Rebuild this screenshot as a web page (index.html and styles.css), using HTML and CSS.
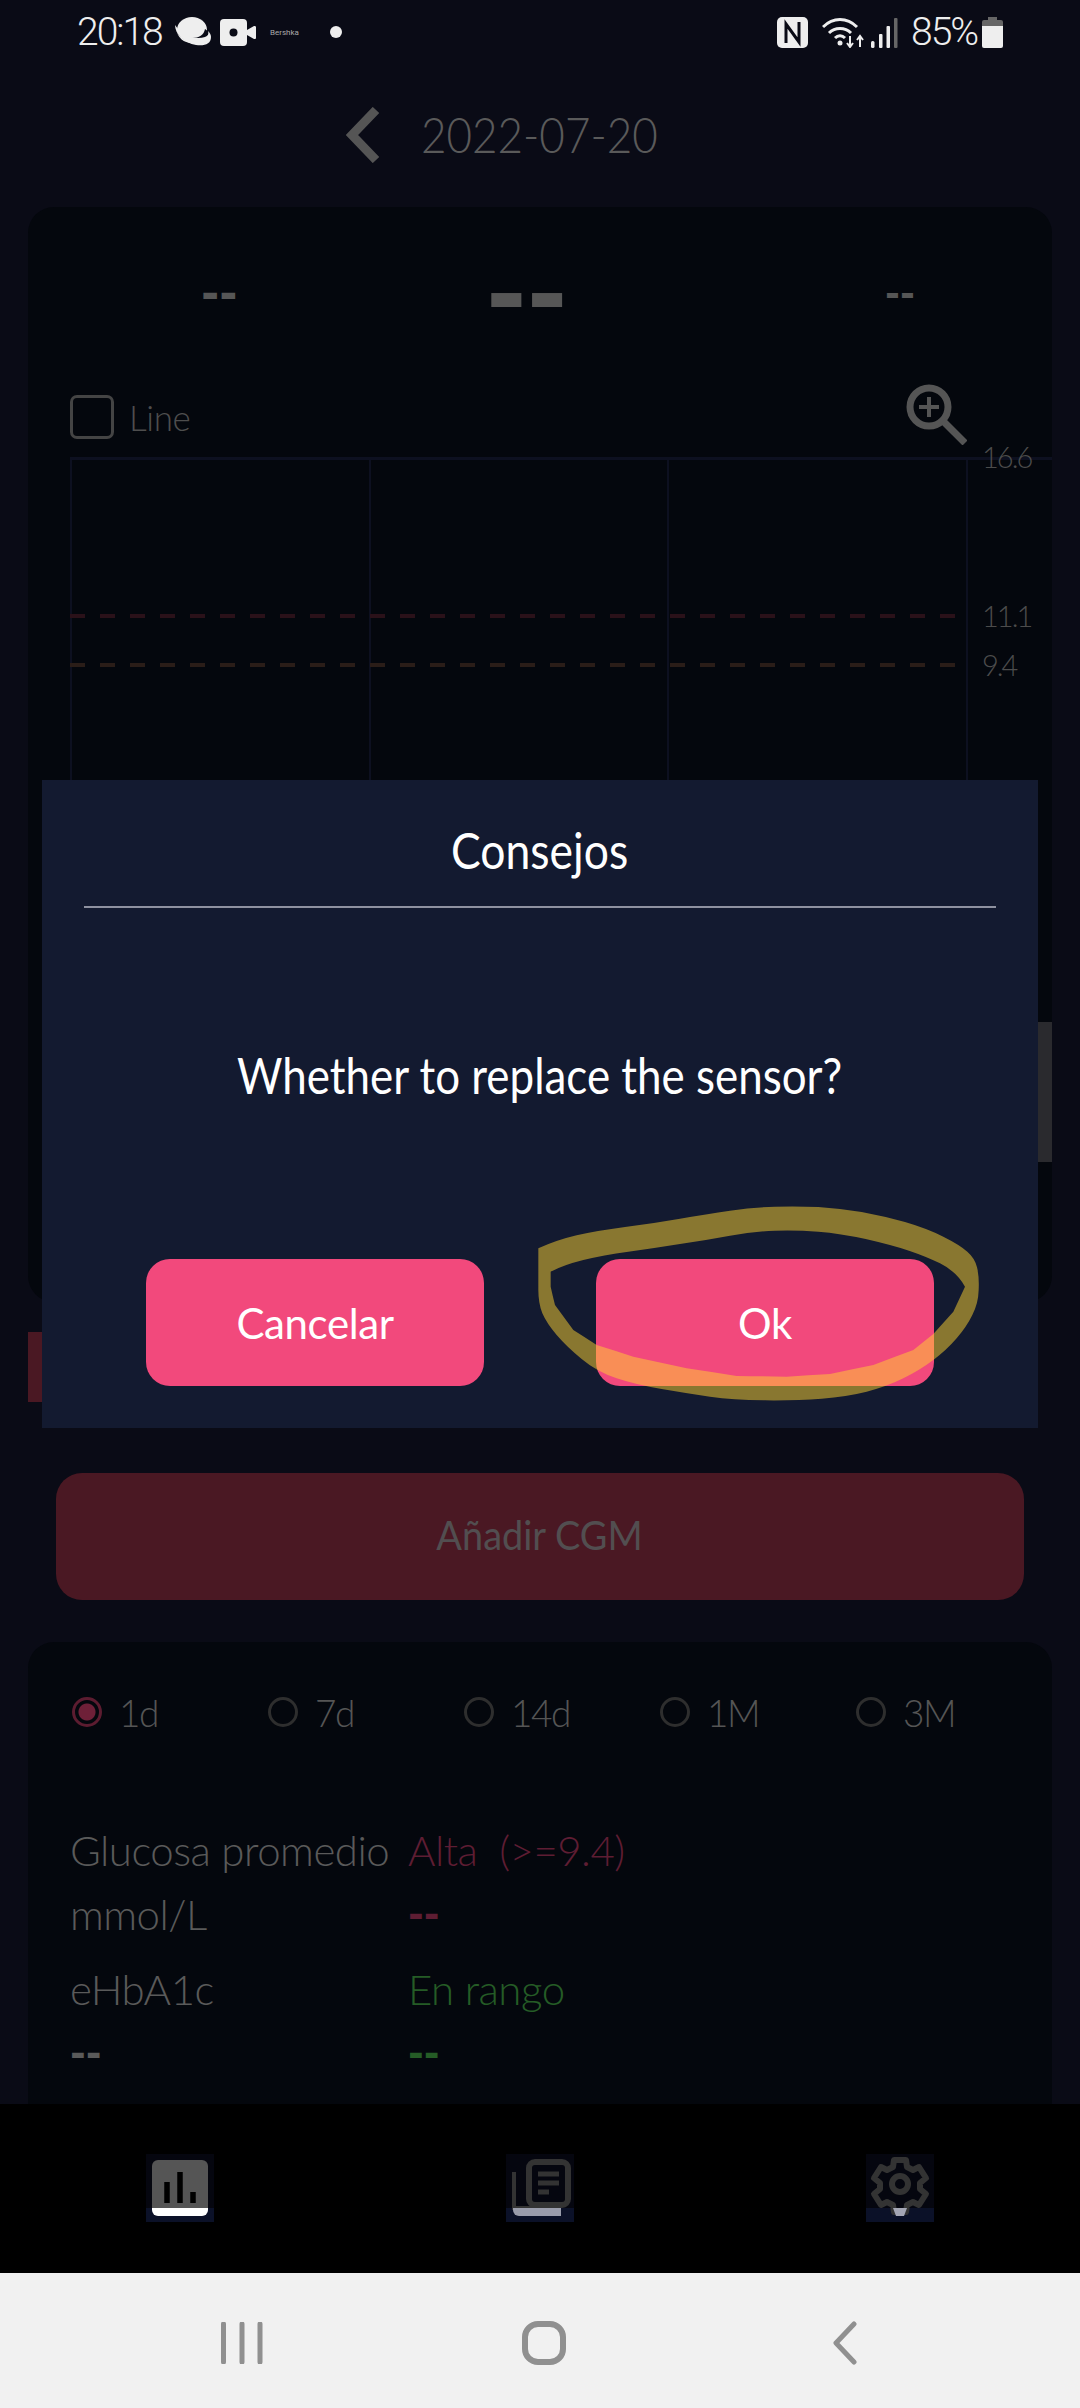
FILE: index.html
```html
<!DOCTYPE html>
<html lang="es">
<head>
<meta charset="utf-8">
<title>Consejos</title>
<link rel="stylesheet" href="styles.css">
</head>
<body>
<div class="screen">
  <div class="status">
    <div class="status-left">
      <span class="time">20:18</span>
      <svg class="ic-planet" viewBox="0 0 38 30"><ellipse cx="18" cy="13" rx="15" ry="13" fill="#eee"/><path d="M1 9C0 16 10 25 22 27c8 1 15-1 15-7 0-3-3-6-6-8-1 6-6 9-13 9C11 21 6 16 1 9z" fill="#0a0b16"/><path d="M1 8c0 9 9 18 21 20 9 1 15-1 15-8 0-2-1-4-3-6 1 3 0 5-3 6-6 2-15 1-21-3C6 14 3 11 1 8z" fill="#eee"/></svg>
      <svg class="ic-cam" viewBox="0 0 36 27"><rect width="27" height="27" rx="4" fill="#eee"/><circle cx="13.500" cy="13.500" r="4" fill="#0a0b16"/><path d="M27 11l7-4c1 0 2 0 2 1v11c0 1-1 1-2 1l-7-4z" fill="#eee"/></svg>
      <span class="brand">Bershka</span>
      <span class="dot"></span>
    </div>
    <div class="status-right">
      <svg class="ic-nfc" viewBox="0 0 31 31"><rect width="31" height="31" rx="5" fill="#eee"/><path d="M9 26V7l13 18V5" fill="none" stroke="#0a0b16" stroke-width="3"/></svg>
      <svg class="ic-wifi" viewBox="0 0 42 31"><path d="M1 10C11 0 25 0 35 10M7 16c6-6 16-6 22 0M13 21c3-3 7-3 10 0" fill="none" stroke="#eee" stroke-width="3"/><circle cx="18" cy="26" r="2.500" fill="#eee"/><path d="M28 19v10m-3-3l3 4 3-4" fill="none" stroke="#eee" stroke-width="2"/><path d="M38 30V19m-3 4l3-4 3 4" fill="none" stroke="#eee" stroke-width="2"/></svg>
      <svg class="ic-signal" viewBox="0 0 27 31"><rect x="0" y="24" width="3.500" height="7" rx="1.500" fill="#eee"/><rect x="8" y="17" width="3.500" height="14" rx="1" fill="#eee"/><rect x="15.500" y="9" width="3.500" height="22" rx="1" fill="#eee"/><rect x="23" y="1" width="3.500" height="30" rx="1" fill="#666"/></svg>
      <span class="pct">85%</span>
      <svg class="ic-batt" viewBox="0 0 21 31"><path d="M6 0h9v3h4a2 2 0 0 1 2 2v4H0V5a2 2 0 0 1 2-2h4z" fill="#666"/><path d="M0 9h21v20a2 2 0 0 1-2 2H2a2 2 0 0 1-2-2z" fill="#eee"/></svg>
    </div>
  </div>

  <main class="content">
    <header class="date-bar">
      <svg class="ic-back" viewBox="0 0 34 56"><path d="M30 3L6 28l24 25" fill="none" stroke="#555" stroke-width="9"/></svg>
      <span class="date">2022-07-20</span>
    </header>

    <section class="card card-chart">
      <div class="readings">
        <span class="read read-left">--</span>
        <span class="read read-mid">--</span>
        <span class="read read-right">--</span>
      </div>
      <div class="chart-tools">
        <span class="checkbox"></span>
        <span class="line-label">Line</span>
        <svg class="ic-zoom" viewBox="0 0 62 62"><circle cx="24" cy="24" r="19" fill="none" stroke="#555" stroke-width="7"/><path d="M38 38l22 22" stroke="#555" stroke-width="7"/><path d="M24 14v20M14 24h20" stroke="#555" stroke-width="4"/></svg>
      </div>
      <div class="chart">
        <div class="chart-cols">
          <span class="col"></span><span class="col"></span><span class="col"></span>
        </div>
        <span class="tick tick-top">16.6</span>
        <div class="limit limit-high"><span class="dash dash-high"></span><span class="tick">11.1</span></div>
        <div class="limit limit-low"><span class="dash dash-low"></span><span class="tick">9.4</span></div>
      </div>
      <span class="behind-block"></span>
    </section>

    <div class="behind-tab"></div>

    <button class="add-btn"><span class="add-label">Añadir CGM</span></button>

    <section class="card card-stats">
      <div class="ranges">
        <span class="range"><i class="radio on"></i>1d</span>
        <span class="range"><i class="radio"></i>7d</span>
        <span class="range"><i class="radio"></i>14d</span>
        <span class="range"><i class="radio"></i>1M</span>
        <span class="range"><i class="radio"></i>3M</span>
      </div>
      <div class="stats">
        <span class="s-label">Glucosa promedio</span><span class="s-red">Alta&nbsp; (&gt;=9.4)</span>
        <span class="s-label">mmol/L</span><span class="s-red s-dash">--</span>
        <span class="s-label s-third">eHbA1c</span><span class="s-green s-third">En rango</span>
        <span class="s-label s-dash">--</span><span class="s-green s-dash">--</span>
      </div>
    </section>
  </main>

  <nav class="tabs">
    <svg class="tab" viewBox="0 0 68 68"><rect width="68" height="68" fill="#05060f"/><rect y="54" width="68" height="14" fill="#0b1128"/><path d="M6 12a6 6 0 0 1 6-6h44a6 6 0 0 1 6 6v42H6z" fill="#555"/><path d="M6 54h56v2a6 6 0 0 1-6 6H12a6 6 0 0 1-6-6z" fill="#fff"/><path d="M21 28v21M34 18v31M47 38v11" stroke="#000" stroke-width="5.500"/></svg>
    <svg class="tab" viewBox="0 0 68 68"><rect width="68" height="68" fill="#05060f"/><rect y="54" width="68" height="14" fill="#0b1128"/><rect x="23" y="8" width="39" height="43" rx="6" fill="none" stroke="#333" stroke-width="6"/><path d="M32 20h21M32 29h21M32 38h11" stroke="#333" stroke-width="5"/><path d="M8 18v36h46" fill="none" stroke="#333" stroke-width="4"/><path d="M7 54v2a6 6 0 0 0 6 6h42v-8z" fill="#999cab"/></svg>
    <svg class="tab tab-gear" viewBox="0 0 68 68"><rect width="68" height="68" fill="#05060f"/><rect y="54" width="68" height="14" fill="#0b1128"/><circle cx="34" cy="30" r="8" fill="none" stroke="#333" stroke-width="6"/><path d="M28 6h12l1 7 6 3 6-3 7 11-6 5v6l6 5-7 11-6-3-6 3-1 7H28l-1-7-6-3-6 3-7-11 6-5v-6l-6-5 7-11 6 3 6-3z" fill="none" stroke="#333" stroke-width="6" stroke-linejoin="round"/><path d="M27 54h14l-3 8h-8z" fill="#a4a6b4"/></svg>
  </nav>

  <nav class="sysnav">
    <svg class="sys-recent" viewBox="0 0 42 42"><path d="M2.500 2v38M21 2v38M39 2v38" stroke="#909090" stroke-width="5" stroke-linecap="round"/></svg>
    <svg class="sys-home" viewBox="0 0 44 44"><rect x="3" y="3" width="38" height="38" rx="13" fill="none" stroke="#909090" stroke-width="6"/></svg>
    <svg class="sys-back" viewBox="0 0 24 44"><path d="M21 3L3 22l18 19" fill="none" stroke="#909090" stroke-width="5" stroke-linecap="round" stroke-linejoin="round"/></svg>
  </nav>

  <div class="dialog">
    <h2 class="dialog-title"><span class="title-text">Consejos</span></h2>
    <p class="dialog-msg"><span class="msg-text">Whether to replace the sensor?</span></p>
    <div class="dialog-actions">
      <button class="pink-btn">Cancelar</button>
      <button class="pink-btn">Ok</button>
    </div>
  </div>

  <svg class="scribble" viewBox="0 0 1440 690"><path fill="#ffd430" fill-opacity="0.5" fill-rule="evenodd" d="M55 175Q110 150 170 136Q230 122 315 111Q400 100 480 86Q560 72 630 62Q700 52 765 50Q830 48 895 51Q960 55 1025 66Q1090 78 1155 96Q1220 115 1270 140Q1320 165 1342 185Q1365 205 1371 232Q1378 260 1376 300Q1375 340 1357 375Q1340 410 1310 445Q1280 480 1240 510Q1200 540 1150 565Q1100 590 1040 605Q980 620 905 626Q830 632 735 631Q640 630 570 620Q500 610 425 597Q350 585 290 565Q230 545 185 507Q140 470 110 435Q80 400 67 370Q55 340 55 300ZM92 245Q130 225 190 210Q250 195 325 185Q400 175 480 162Q560 150 630 137Q700 125 765 122Q830 120 895 125Q960 130 1037 147Q1115 165 1167 182Q1220 200 1260 220Q1310 245 1335 290L1300 365Q1270 398 1240 432Q1210 456 1180 480Q1120 502 1060 525Q995 538 930 552Q865 556 800 560Q725 559 650 558Q575 546 500 535Q420 517 340 500Q285 482 230 465Q195 442 160 420Q132 382 105 345Q98 317 92 290Z"/></svg>
</div>
</body>
</html>
```

FILE: styles.css
```css
* { box-sizing: border-box; }
html, body { margin: 0; padding: 0; background: #0a0b16; }
body { font-family: "Lato", "Liberation Sans", sans-serif; }

.screen {
  position: relative;
  width: 1080px;
  height: 2408px;
  overflow: hidden;
  display: flex;
  flex-direction: column;
  background: #0a0b16;
}

/* status bar */
.status {
  height: 64px;
  flex: none;
  display: flex;
  justify-content: space-between;
  align-items: center;
  padding: 0 77px 0 77px;
  color: #eee;
}
.status-left, .status-right { display: flex; align-items: center; }
.time, .pct { font-family: "Roboto", sans-serif; font-weight: 300; font-size: 39px; letter-spacing: -2px; line-height: 1; }
.time { width: 84px; }
.ic-planet { width: 38px; height: 30px; margin-left: 13px; }
.ic-cam { width: 36px; height: 27px; margin-left: 8px; }
.brand { font-family: "Roboto", sans-serif; font-size: 8px; color: #aaa; margin-left: 14px; width: 30px; }
.dot { width: 12px; height: 12px; border-radius: 50%; background: #eee; margin-left: 30px; }
.ic-nfc { width: 31px; height: 31px; }
.ic-wifi { width: 42px; height: 31px; margin-left: 14px; }
.ic-signal { width: 27px; height: 31px; margin-left: 7px; }
.pct { margin-left: 13px; width: 66px; }
.ic-batt { width: 21px; height: 31px; margin-left: 5px; }

.content { flex: 1; min-height: 0; overflow: hidden; }

/* date header */
.date-bar {
  height: 143px;
  display: flex;
  align-items: center;
  padding: 0 0 0 346px;
}
.ic-back { width: 34px; height: 56px; margin-top: -2px; }
.date {
  display: inline-block;
  font-size: 50px;
  font-weight: 300;
  color: #5a5a5a;
  margin: -4px 0 0 41px;
  line-height: 1;
  transform: scaleX(0.88);
  transform-origin: left center;
}

/* cards */
.card {
  position: relative;
  margin: 0 28px;
  background: #04070d;
  border-radius: 26px;
}
.card-chart { height: 1095px; padding-top: 1px; }

.readings { display: flex; align-items: center; height: 172px; padding-left: 173px; }
.read { font-family: "DejaVu Sans", sans-serif; font-weight: 700; color: #565656; line-height: 1; }
.read-left { font-size: 44px; width: 41px; }
.read-mid { font-size: 98px; margin-left: 244px; width: 90px; }
.read-right { font-size: 36px; margin-left: 309px; }

.chart-tools { display: flex; align-items: center; height: 78px; padding: 0 0 5px 42px; position: relative; }
.checkbox { width: 44px; height: 44px; border: 3px solid #444; border-radius: 7px; }
.line-label { font-size: 35px; font-weight: 300; color: #4e4e4e; margin-left: 15px; letter-spacing: -0.4px; }
.ic-zoom { position: absolute; left: 877px; top: 3px; width: 62px; height: 62px; }

.chart { position: relative; margin-left: 42px; height: 800px; border-top: 3px solid #0d1020; margin-top: -1px; }
.chart-cols { display: flex; height: 100%; width: 898px; border-right: 2px solid #0d1020; }
.col { flex: 1; border-left: 2px solid #0d1020; }
.tick { font-size: 29px; font-weight: 300; color: #4c4c4c; line-height: 1; letter-spacing: -2px; }
.tick-top { position: absolute; left: 912px; top: -18px; }
.limit { position: absolute; left: 0; display: flex; align-items: center; }
.limit-high { top: 141px; }
.limit-low { top: 190px; }
.dash { width: 898px; height: 4px; margin-right: 14px; }
.dash-high { background: repeating-linear-gradient(90deg, #2a1119 0 15px, transparent 15px 30px); }
.dash-low { background: repeating-linear-gradient(90deg, #2a1d18 0 15px, transparent 15px 30px); }

.behind-block { position: absolute; right: 0; top: 815px; width: 60px; height: 140px; background: #2a2a2e; }

.behind-tab { margin: 30px 0 0 28px; width: 120px; height: 70px; background: #4a1823; }

.add-btn {
  display: block;
  width: 968px;
  height: 127px;
  margin: 71px 0 0 56px;
  border: 0;
  border-radius: 26px;
  background: #4a1823;
  color: #524e50;
  font: 400 41px "Lato", sans-serif;
}
.add-label { display: inline-block; transform: scaleX(0.925) translateY(-2px); }

.card-stats { margin-top: 42px; height: 520px; padding: 0 0 0 44px; }
.ranges { display: flex; padding-top: 55px; }
.range { width: 196.500px; display: flex; align-items: center; height: 30px; font-size: 37px; font-weight: 300; color: #555; letter-spacing: -1.4px; }
.radio { width: 30px; height: 30px; border-radius: 50%; border: 3px solid #2e2e2e; margin-right: 17px; flex: none; }
.radio.on { border-color: #5c1c30; background: radial-gradient(circle, #6e2038 0 8px, transparent 9px); }

.stats {
  display: grid;
  grid-template-columns: 338px auto;
  justify-content: start;
  margin: 100px 0 0 -2px;
  font-size: 42px;
  font-weight: 300;
  line-height: 46px;
  row-gap: 18px;
  letter-spacing: -0.5px;
  color: #555;
}
.s-label { color: #5a5a5a; height: 46px; white-space: nowrap; }
.s-red { color: #5e1d33; height: 46px; }
.s-green { color: #255c26; height: 46px; }
.s-dash { font-family: "DejaVu Sans", sans-serif; font-weight: 700; font-size: 38px; letter-spacing: 0; }
.s-third { margin-top: 11px; }

/* bottom tabs */
.tabs {
  flex: none;
  height: 169px;
  background: #000;
  display: flex;
  padding: 50px 146px 0;
  justify-content: space-between;
}
.tab { width: 68px; height: 68px; }

.sysnav {
  flex: none;
  height: 135px;
  background: #f1f1f1;
  display: flex;
  align-items: center;
  padding: 5px 223px 0 221px;
  justify-content: space-between;
}
.sys-recent { width: 42px; height: 42px; }
.sys-home { width: 44px; height: 44px; margin-right: 9px; }
.sys-back { width: 24px; height: 44px; }

/* dialog */
.dialog {
  position: absolute;
  left: 42px;
  top: 780px;
  width: 996px;
  height: 648px;
  background: #131a30;
  color: #fff;
  display: flex;
  flex-direction: column;
  align-items: center;
}
.dialog-title {
  width: 912px;
  height: 128px;
  margin: 0;
  border-bottom: 2px solid #8e91a0;
  padding-top: 42px;
  text-align: center;
  font-size: 50px;
  font-weight: 400;
  line-height: 56px;
}
.title-text { display: inline-block; transform: scaleX(0.89); }
.dialog-msg {
  margin: 139px 0 0;
  font-size: 50px;
  line-height: 56px;
  font-weight: 400;
  text-align: center;
  white-space: nowrap;
}
.msg-text { display: inline-block; transform: scaleX(0.878); }
.dialog-actions {
  display: flex;
  gap: 112px;
  margin-top: 156px;
}
.pink-btn {
  width: 338px;
  height: 127px;
  border: 0;
  border-radius: 24px;
  background: #f2497c;
  color: #fff;
  font: 400 42px "Lato", sans-serif;
  letter-spacing: -0.4px;
}

.scribble { position: absolute; left: 520px; top: 1190px; width: 480px; height: 230px; }
```
